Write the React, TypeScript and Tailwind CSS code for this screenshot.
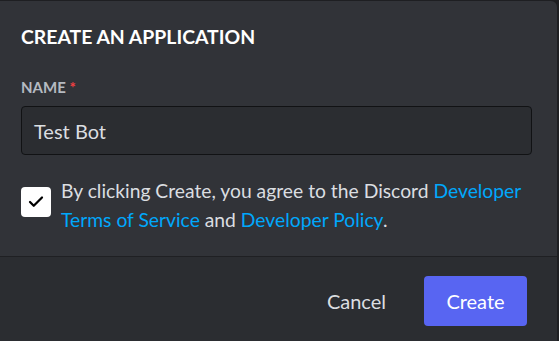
import { Check } from 'lucide-react';

export default function App() {
  return (
    <div className="w-[559px] h-[341px] overflow-hidden bg-[#1e1f22] pt-px pr-[2px]" style={{ fontFamily: 'Lato, "Noto Sans", sans-serif' }}>
      <div className="h-[340px] flex flex-col bg-[#313338] rounded-tr-[6px] overflow-hidden">
        {/* Body */}
        <div className="pl-[21px] pr-[25px] pt-[23px]">
          <h1 className="text-[19.4px] leading-[26px] font-bold text-white uppercase">
            Create an Application
          </h1>

          <label className="mt-[27px] block text-[15px] leading-[20px] font-bold uppercase text-[#b5bac1]">
            Name <span className="text-[#f23f42]">*</span>
          </label>
          <div className="mt-[9px] h-[49px] rounded-[4px] border border-[#111214] bg-[#2b2d31] flex items-center px-[12px]">
            <span className="text-[20px] text-[#dbdee1]">Test Bot</span>
          </div>

          <div className="mt-[21px] flex items-start gap-[10px]">
            <div className="mt-[11px] w-[30px] h-[30px] shrink-0 rounded-[4px] bg-white flex items-center justify-center">
              <Check className="w-[18px] h-[18px] text-black" strokeWidth={3} />
            </div>
            <p className="text-[19.3px] leading-[29px] text-[#dbdee1]">
              By clicking Create, you agree to the Discord{' '}
              <a className="text-[#00a8fc]">Developer Terms of Service</a> and{' '}
              <a className="text-[#00a8fc]">Developer Policy</a>.
            </p>
          </div>
        </div>

        {/* Footer */}
        <div className="mt-auto h-[85px] bg-[#2b2d31] border-t border-[#1f2023] flex justify-end items-start pt-[19px] pr-[30px] gap-[38px]">
          <button className="h-[50px] text-[20px] text-[#dbdee1]">Cancel</button>
          <button className="h-[50px] w-[103px] rounded-[4px] bg-[#5865f2] text-[20px] text-white">Create</button>
        </div>
      </div>
    </div>
  );
}
